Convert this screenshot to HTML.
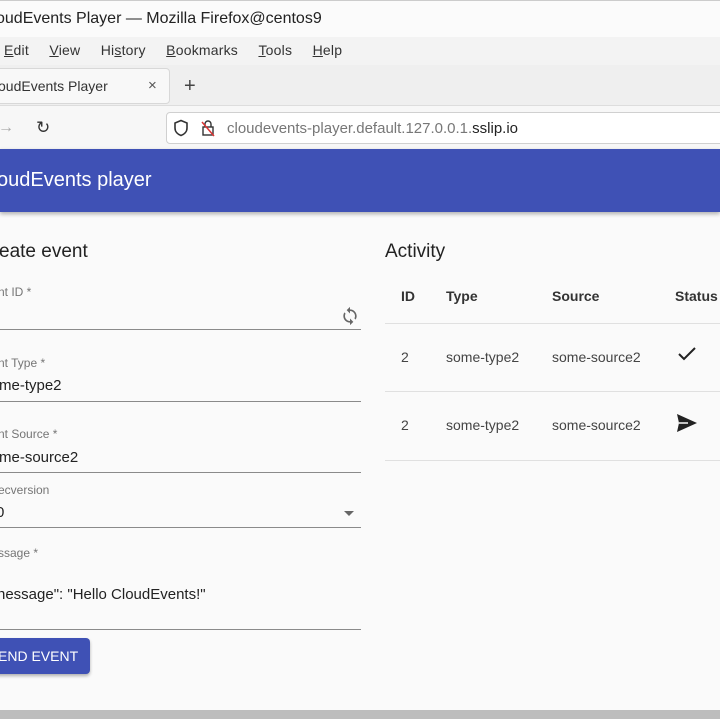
<!DOCTYPE html>
<html><head><style>
*{margin:0;padding:0;box-sizing:border-box}
body{width:720px;height:719px;overflow:hidden;background:#fafafa;font-family:"Liberation Sans",sans-serif;position:relative;color:#222}
.a{position:absolute;white-space:nowrap}
.lbl{font-size:12px;color:#757575}
.val{font-size:15px;color:#222}
.line{position:absolute;left:0;width:361px;height:1px;background:#8a8a8a}
.th{font-size:14px;font-weight:bold;color:#333}
.td{font-size:14px;color:#444}
</style></head><body>
<div class="a" style="left:0;top:0;width:720px;height:37px;background:#fbfbfb;border-top:1px solid #ccc"></div>
<div class="a" style="left:-4px;top:10px;font-size:16px;color:#222">oudEvents Player — Mozilla Firefox@centos9</div>
<div class="a" style="left:0;top:37px;width:720px;height:28px;background:#f3f3f3"></div>
<div class="a" style="left:4px;top:42px;font-size:14px;color:#333;letter-spacing:.2px"><u>E</u>dit&nbsp;&nbsp;&nbsp;&nbsp;&nbsp;<u>V</u>iew&nbsp;&nbsp;&nbsp;&nbsp;&nbsp;Hi<u>s</u>tory&nbsp;&nbsp;&nbsp;&nbsp;&nbsp;<u>B</u>ookmarks&nbsp;&nbsp;&nbsp;&nbsp;&nbsp;<u>T</u>ools&nbsp;&nbsp;&nbsp;&nbsp;&nbsp;<u>H</u>elp</div>
<div class="a" style="left:0;top:65px;width:720px;height:41px;background:#efefef;border-bottom:1px solid #ddd"></div>
<div class="a" style="left:-6px;top:68px;width:176px;height:36px;background:#f8f8f8;border:1px solid #d8d8d8;border-radius:4px"></div>
<div class="a" style="left:-2px;top:78px;font-size:14px;color:#333">oudEvents Player</div>
<div class="a" style="left:148px;top:77px;font-size:15px;color:#555">×</div>
<div class="a" style="left:184px;top:75px;font-size:20px;color:#444">+</div>
<div class="a" style="left:0;top:106px;width:720px;height:43px;background:#f7f7f7"></div>
<div class="a" style="left:-2px;top:119px;font-size:16px;color:#aaa">→</div>
<div class="a" style="left:36px;top:118px;font-size:17px;color:#333">↻</div>
<div class="a" style="left:166px;top:112px;width:560px;height:32px;background:#fff;border:1px solid #d0d0d0;border-radius:4px"></div>
<svg class="a" style="left:173px;top:119px" width="16" height="18" viewBox="0 0 16 18"><path d="M8 1.5L2 4v5c0 4 3 6.5 6 7.5 3-1 6-3.5 6-7.5V4z" fill="none" stroke="#333" stroke-width="1.6"/></svg>
<svg class="a" style="left:201px;top:119px" width="14" height="18" viewBox="0 0 14 18"><rect x="2" y="8" width="10" height="8" fill="none" stroke="#333" stroke-width="1.4"/><path d="M4 8V5a3 3 0 0 1 6 0v3" fill="none" stroke="#333" stroke-width="1.4"/><path d="M1 3L13 17" stroke="#d33" stroke-width="1.5"/></svg>
<div class="a" style="left:227px;top:120px;font-size:15px;color:#777">cloudevents-player.default.127.0.0.1.<span style="color:#222">sslip.io</span></div>
<div class="a" style="left:0;top:149px;width:720px;height:63px;background:#3f51b5;box-shadow:0 2px 4px rgba(0,0,0,.3)"></div>
<div class="a" style="left:-3px;top:169px;font-size:20px;color:#fff">oudEvents player</div>

<div class="a" style="left:-1px;top:241px;font-size:19px;color:#222">eate event</div>
<div class="a lbl" style="left:-2px;top:285px">nt ID *</div>
<svg class="a" style="left:340px;top:305px" width="20" height="22" viewBox="0 0 24 24"><path d="M12 4V1L8 5l4 4V6c3.3 0 6 2.7 6 6 0 1-.3 2-.7 2.8l1.5 1.5C19.5 15 20 13.6 20 12c0-4.4-3.6-8-8-8zm0 14c-3.3 0-6-2.7-6-6 0-1 .3-2 .7-2.8L5.2 7.7C4.5 9 4 10.4 4 12c0 4.4 3.6 8 8 8v3l4-4-4-4v3z" fill="#666"/></svg>
<div class="line" style="top:329px"></div>
<div class="a lbl" style="left:-2px;top:356px">nt Type *</div>
<div class="a val" style="left:-1px;top:377px">me-type2</div>
<div class="line" style="top:401px"></div>
<div class="a lbl" style="left:-2px;top:427px">nt Source *</div>
<div class="a val" style="left:-1px;top:449px">me-source2</div>
<div class="line" style="top:472px"></div>
<div class="a lbl" style="left:-2px;top:483px">ecversion</div>
<div class="a val" style="left:-4px;top:504px">0</div>
<div class="a" style="left:344px;top:511px;width:0;height:0;border-left:5px solid transparent;border-right:5px solid transparent;border-top:5px solid #666"></div>
<div class="line" style="top:527px"></div>
<div class="a lbl" style="left:-2px;top:546px">ssage *</div>
<div class="a val" style="left:-3px;top:586px">nessage": "Hello CloudEvents!"</div>
<div class="line" style="top:629px"></div>
<div class="a" style="left:-10px;top:638px;width:100px;height:36px;background:#3f51b5;border-radius:4px;box-shadow:0 2px 3px rgba(0,0,0,.3)"></div>
<div class="a" style="left:-2px;top:648px;font-size:14px;color:#fff">END EVENT</div>

<div class="a" style="left:385px;top:241px;font-size:19px;color:#222">Activity</div>
<div class="a th" style="left:401px;top:288px">ID</div>
<div class="a th" style="left:446px;top:288px">Type</div>
<div class="a th" style="left:552px;top:288px">Source</div>
<div class="a th" style="left:675px;top:288px">Status</div>
<div class="a" style="left:385px;top:323px;width:335px;height:1px;background:#e0e0e0"></div>
<div class="a td" style="left:401px;top:349px">2</div>
<div class="a td" style="left:446px;top:349px">some-type2</div>
<div class="a td" style="left:552px;top:349px">some-source2</div>
<svg class="a" style="left:677px;top:345px" width="20" height="18" viewBox="0 0 20 18"><path d="M2 9l5 5L18 3" fill="none" stroke="#222" stroke-width="2"/></svg>
<div class="a" style="left:385px;top:391px;width:335px;height:1px;background:#e0e0e0"></div>
<div class="a td" style="left:401px;top:417px">2</div>
<div class="a td" style="left:446px;top:417px">some-type2</div>
<div class="a td" style="left:552px;top:417px">some-source2</div>
<svg class="a" style="left:676px;top:413px" width="22" height="20" viewBox="0 0 22 20"><path d="M1 1L21 10 1 19 3 10z" fill="#222"/><path d="M3 10h9" stroke="#fafafa" stroke-width="1.5"/></svg>
<div class="a" style="left:385px;top:460px;width:335px;height:1px;background:#e0e0e0"></div>
<div class="a" style="left:0;top:710px;width:720px;height:9px;background:#bdbdbd"></div>
</body></html>
